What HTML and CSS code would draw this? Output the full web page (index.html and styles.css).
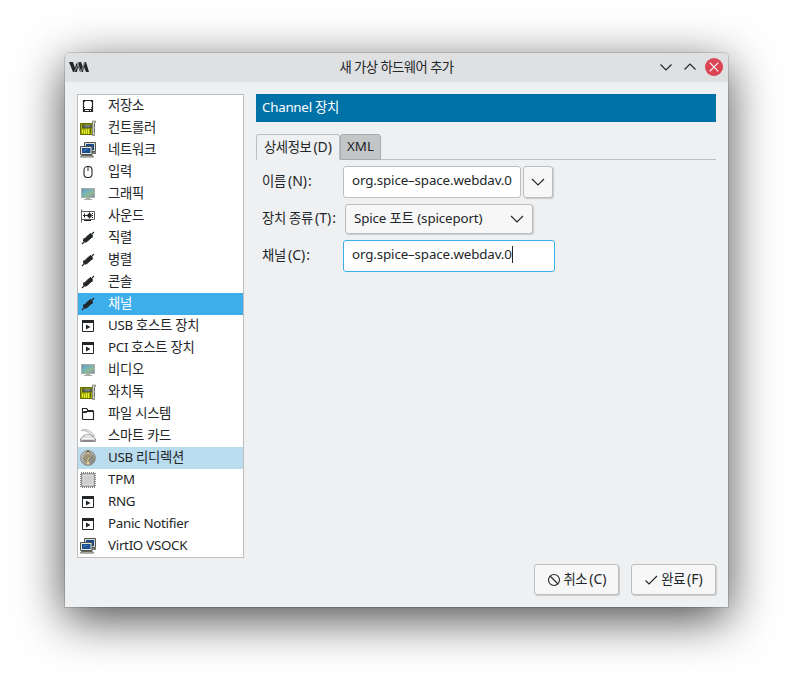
FILE: index.html
```html
<!DOCTYPE html>
<html lang="ko">
<head>
<meta charset="utf-8">
<title>새 가상 하드웨어 추가</title>
<link rel="stylesheet" href="styles.css">
</head>
<body>
<svg class="defs" width="0" height="0" aria-hidden="true">
  <defs>
    <linearGradient id="screen" x1="0" y1="0" x2="1" y2="1"><stop offset="0" stop-color="#5e91b8"/><stop offset=".4" stop-color="#6fb3b5"/><stop offset=".65" stop-color="#8dba8a"/><stop offset="1" stop-color="#8a80bd"/></linearGradient>
    <linearGradient id="metal" x1="0" y1="0" x2="1" y2="1"><stop offset="0" stop-color="#c9c9c5"/><stop offset="1" stop-color="#777773"/></linearGradient>
    <symbol id="disk" viewBox="0 0 16 16"><path d="M3.500 2.500h9v11h-9z" fill="none" stroke="#232629" stroke-width="1.200"/><path d="M3 11h10v3H3z" fill="#232629"/><path d="M5 12h4v1H5zM10 12h1v1h-1z" fill="#fff"/><path d="M4 3h1v1H4zM11 3h1v1h-1zM4 9h1v1H4zM11 9h1v1h-1z" fill="#232629"/></symbol>
    <symbol id="card" viewBox="0 0 16 16"><path d="M.5 3.500h13v11H.5z" fill="#a3ad00" stroke="#626900"/><path d="M2 4.500h10v4H2z" fill="#59662b"/><path d="M3 5.500h8v2H3z" fill="#4c5961"/><path d="M5 6h5" stroke="#9ba5ab"/><path d="M2.500 10v3M4.500 10v4M6.500 9v5M8.500 9v5" stroke="#e5ee35"/><path d="M10.500 9v4" stroke="#596100"/><path d="M12.500 1h3v1.500h-1v13h-2z" fill="#d1d3cc" stroke="#777b71" stroke-width=".8"/><path d="M14.500 4v3M14.500 9v3" stroke="#60645c"/></symbol>
    <symbol id="network" viewBox="0 0 16 16"><path d="M4.500 .5h11v9h-11z" fill="#d8dcd5" stroke="#53564f"/><path d="M6 2h8v6H6z" fill="#174887"/><path d="M12 11h4" stroke="#777b73" stroke-width="2"/><path d="M.5 4.500h11.500v8H.5z" fill="#e3e5df" stroke="#53564f"/><path d="M2 6h8.500v5H2z" fill="#1b4d91"/><path d="M2.500 10l7-3H4z" fill="#386fac"/><path d="M1.500 13.500h11l1 1.500H.5z" fill="#e3e5df" stroke="#63675e"/></symbol>
    <symbol id="mouse" viewBox="0 0 16 16"><rect x="4" y="2.500" width="8" height="11" rx="3.500" fill="none" stroke="#232629" stroke-width="1.100"/><path d="M8 3v4" stroke="#232629"/></symbol>
    <symbol id="display" viewBox="0 0 16 16"><path d="M1.500 2.500h13v9h-13z" fill="url(#screen)" stroke="#a5adae"/><path d="M2 9l5-6 2 0-3 8M8 11l5-8" stroke="#9eaec1" fill="none" opacity=".5"/><path d="M6 12h4v1H6zM4 13h8v1H4z" fill="#a8aaa5"/></symbol>
    <symbol id="sound" viewBox="0 0 16 16"><path d="M1.500 1.500v13M1 3.500h13.500v8H2" fill="none" stroke="#5b5e60"/><circle cx="9.500" cy="7.500" r="2.300" fill="#232629"/><path d="M4.500 5.500v4M3 7.500h5M9.500 4.500v6M12.500 5v1M12.500 9v1M12 7.500h1M4 12.500h7" stroke="#232629"/></symbol>
    <symbol id="serial" viewBox="0 0 16 16"><path d="M2 14l4-4M10.500 5.500L14 2" stroke="#232629" stroke-width="1.100"/><path d="M3.500 11v-1l5-5 1.500-1 .5-.5 2 2-.5 1.500-5 4.500-1 .5h-1z" fill="#232629" stroke="#232629"/><path d="M4 8v2M12.500 7.500h-2" stroke="#232629"/></symbol>
    <symbol id="host" viewBox="0 0 16 16"><path d="M2.500 3.500h11v10h-11z" fill="none" stroke="#232629"/><path d="M2 2h12v3H2zM6 6.500l4.500 2.500L6 11.500z" fill="#232629"/></symbol>
    <symbol id="folder" viewBox="0 0 16 16"><path d="M2.500 13.500v-11h4l1 1v2h-4M2.500 13.500h11v-8H7l-1 1H3M7 4.500h6.500" fill="none" stroke="#232629" stroke-width="1.150"/></symbol>
    <symbol id="smart" viewBox="0 0 16 16"><path d="M1 2.500C6-.5 12 3 14.500 8l-3 1C9 4 6 2.500 1 2.500z" fill="#e3e3e3" stroke="#b0b0b0" stroke-width=".8"/><path d="M.5 11l4-4h7l4 4v2.500H.5z" fill="#d7d7d7" stroke="#8c8c8c"/><path d="M2 10.500h12M5 8h6" stroke="#fff"/><path d="M2 12.500h12" stroke="#888"/></symbol>
    <symbol id="usb" viewBox="0 0 16 16"><circle cx="8" cy="8" r="7.500" fill="url(#metal)" stroke="#959591"/><path d="M8 13V3M8 11L5 8.500V5M8 9l3-2V5M6.500 4L8 1.800 9.500 4" fill="none" stroke="#554629" stroke-width="2.200"/><path d="M8 13V3M8 11L5 8.500V5M8 9l3-2V5M6.500 4L8 2 9.500 4" fill="none" stroke="#f0e5bc"/><circle cx="8" cy="13" r="1.500" fill="#ead69a"/></symbol>
    <symbol id="chip" viewBox="0 0 16 16"><path d="M1 1h14v14H1z" fill="none" stroke="#858588" stroke-width="2" stroke-dasharray="1 1"/><path d="M1.500 1.500h13v13h-13z" fill="#adadad" stroke="#858585" stroke-width=".7"/><path d="M3 3h10v10H3z" fill="#cfcfcf" stroke="#e8e8e8" stroke-width=".8"/></symbol>
  </defs>
</svg>
<main class="window">
  <header class="titlebar">
    <svg class="logo" viewBox="0 0 20 12"><path d="M0 1h4l2 6 1-4 2-2h3l2 5 1-5h2l3 10h-3l-2-5-1 5h-3l-2-5-1 5H4z" fill="#232629"/><path d="M5.500 11L10 1M8 1l4 10M12 11l4-10" stroke="#bfc1c3" stroke-width=".7"/></svg>
    <h1>새 가상 하드웨어 추가</h1>
    <div class="controls">
      <svg viewBox="0 0 18 18"><path d="M3.500 6.500L9 12l5.500-5.500"/></svg>
      <svg viewBox="0 0 18 18"><path d="M3.500 11.500L9 6l5.500 5.500"/></svg>
      <svg class="close" viewBox="0 0 18 18"><circle cx="9" cy="9" r="9"/><path d="M4.700 4.700l8.600 8.600m0-8.600l-8.600 8.600"/></svg>
    </div>
  </header>
  <div class="body">
    <ul class="hardware">
      <li><svg><use href="#disk"/></svg>저장소</li>
      <li><svg><use href="#card"/></svg>컨트롤러</li>
      <li><svg><use href="#network"/></svg>네트워크</li>
      <li><svg><use href="#mouse"/></svg>입력</li>
      <li><svg><use href="#display"/></svg>그래픽</li>
      <li><svg><use href="#sound"/></svg>사운드</li>
      <li><svg><use href="#serial"/></svg>직렬</li>
      <li><svg><use href="#serial"/></svg>병렬</li>
      <li><svg><use href="#serial"/></svg>콘솔</li>
      <li class="selected"><svg><use href="#serial"/></svg>채널</li>
      <li><svg><use href="#host"/></svg>USB 호스트 장치</li>
      <li><svg><use href="#host"/></svg>PCI 호스트 장치</li>
      <li><svg><use href="#display"/></svg>비디오</li>
      <li><svg><use href="#card"/></svg>와치독</li>
      <li><svg><use href="#folder"/></svg>파일 시스템</li>
      <li><svg><use href="#smart"/></svg>스마트 카드</li>
      <li class="hover"><svg><use href="#usb"/></svg>USB 리디렉션</li>
      <li><svg><use href="#chip"/></svg>TPM</li>
      <li><svg><use href="#host"/></svg>RNG</li>
      <li><svg><use href="#host"/></svg>Panic Notifier</li>
      <li><svg><use href="#network"/></svg>VirtIO VSOCK</li>
    </ul>
    <section class="details">
      <h2>Channel 장치</h2>
      <div class="tabs"><div class="tab active">상세정보<span class="key">(D)</span></div><div class="tab">XML</div></div>
      <div class="form">
        <div class="row"><label>이름<span class="key">(N)<b>:</b></span></label><div class="field name">org.spice<i>–</i>space.webdav.0</div><button class="drop"><svg class="chevron" viewBox="0 0 14 8"><path d="M1 1l6 6 6-6"/></svg></button></div>
        <div class="row"><label>장치 종류<span class="key">(T)<b>:</b></span></label><button class="select"><span>Spice 포트 (spiceport)</span><svg class="chevron" viewBox="0 0 14 8"><path d="M1 1l6 6 6-6"/></svg></button></div>
        <div class="row"><label>채널<span class="key">(C)<b>:</b></span></label><div class="field channel">org.spice<i>–</i>space.webdav.0<span class="caret"></span></div></div>
      </div>
    </section>
  </div>
  <footer>
    <button class="action"><svg viewBox="0 0 14 14"><circle cx="7" cy="7" r="5.500"/><path d="M3 3l8 8"/></svg><span>취소<span class="key">(C)</span></span></button>
    <button class="action"><svg viewBox="0 0 14 14"><path d="M1.500 7.500l3.500 3.500 8-8"/></svg><span>완료<span class="key">(F)</span></span></button>
  </footer>
</main>
</body>
</html>
```
FILE: styles.css
```css
* { box-sizing: border-box; }
body { margin: 0; padding: 53px 65px 77px; background: #fff; color: #232629; font: 13.33px/22px "Noto Sans", "Noto Sans CJK KR", sans-serif; overflow: hidden; }
.defs { display: block; }
.window { width: 663px; height: 554px; background: #eff0f1; border-radius: 4px 4px 0 0; display: flex; flex-direction: column; box-shadow: 0 0 0 1px rgba(0,0,0,.13), 0 12px 48px rgba(0,0,0,.72); }
.titlebar { height: 29px; flex: none; display: grid; grid-template-columns: 80px 1fr 80px; align-items: center; background: #dee0e2; border-radius: 4px 4px 0 0; padding-bottom: 1px; }
.logo { width: 20px; height: 12px; margin-left: 4px; }
h1 { margin: 0; text-align: center; font-size: 13.33px; font-weight: 400; letter-spacing: -.55px; padding-bottom: 1px; }
.controls { display: flex; gap: 6px; justify-content: flex-end; padding-right: 5px; }
.controls svg { width: 18px; height: 18px; flex: none; fill: none; stroke: #232629; stroke-width: 1.2; }
.controls .close { stroke: #fff; }
.close circle { fill: #da4453; stroke: none; }
.body { display: flex; gap: 12px; padding: 12px 12px 0; }
.hardware { width: 167px; height: 464px; margin: 0; padding: 0; border: 1px solid #bcbebf; background: #fff; list-style: none; flex: none; }
.hardware li { height: 22px; display: flex; padding-left: 2px; white-space: pre; letter-spacing: -.28px; line-height: 20px; }
.hardware svg { width: 16px; height: 16px; margin: 3px 12px 0 0; flex: none; }
.hardware .selected { background: #3daee9; color: #fff; }
.hardware .hover { background: #b9dcee; }
.details { width: 460px; }
h2 { height: 28px; margin: 0; padding: 1px 6px; background: #0072a8; color: #fff; font-size: 13.33px; line-height: 24px; font-weight: 400; letter-spacing: -.25px; }
.tabs { display: flex; height: 26px; margin-top: 12px; border-bottom: 1px solid #bcbebf; }
.tab { height: 26px; width: 41px; border: 1px solid #a9abad; border-radius: 3px 3px 0 0; background: #c4c5c7; text-align: center; line-height: 23px; white-space: nowrap; }
.tab.active { width: 84px; background: #eff0f1; border-color: #bcbebf; border-bottom-color: #eff0f1; letter-spacing: -.4px; }
.key { margin-left: 2px; font-size: 14px; letter-spacing: 0; }
.key b { font-weight: 400; margin-left: 1px; }
.form { display: flex; flex-direction: column; gap: 5px; padding-top: 6px; }
.row { display: flex; height: 32px; align-items: center; }
label { width: 81px; margin-left: 6px; padding-bottom: 2px; flex: none; white-space: nowrap; letter-spacing: -.3px; }
button { font: inherit; color: inherit; border: 1px solid #bcbebf; border-radius: 3px; background: #f7f7f7; box-shadow: 1px 1px 1px rgba(0,0,0,.16); padding: 0; }
.field { height: 32px; background: #fff; border: 1px solid #bcbebf; border-radius: 3px; padding: 0 8px; line-height: 26px; white-space: nowrap; letter-spacing: -.12px; }
.field i { font-style: normal; }
.name { width: 178px; }
.channel { width: 212px; border-color: #3daee9; }
.caret { display: inline-block; width: 1px; height: 17px; background: #232629; vertical-align: -4px; }
.drop { width: 30px; height: 32px; margin-left: 2px; display: flex; align-items: center; justify-content: center; }
.chevron { width: 14px; height: 8px; fill: none; stroke: #232629; stroke-width: 1.1; }
.select { width: 188px; height: 30px; margin-left: 2px; padding: 0 8px; display: flex; align-items: center; justify-content: space-between; letter-spacing: -.12px; }
.select span { padding-bottom: 2px; }
footer { display: flex; gap: 12px; justify-content: flex-end; margin: 6px 12px 0; }
.action { width: 85px; height: 31px; display: flex; align-items: center; justify-content: center; white-space: nowrap; letter-spacing: -.4px; }
.action > span { padding-bottom: 2px; }
.action svg { width: 14px; height: 14px; margin-right: 3px; fill: none; stroke: #232629; stroke-width: 1.1; }
```
